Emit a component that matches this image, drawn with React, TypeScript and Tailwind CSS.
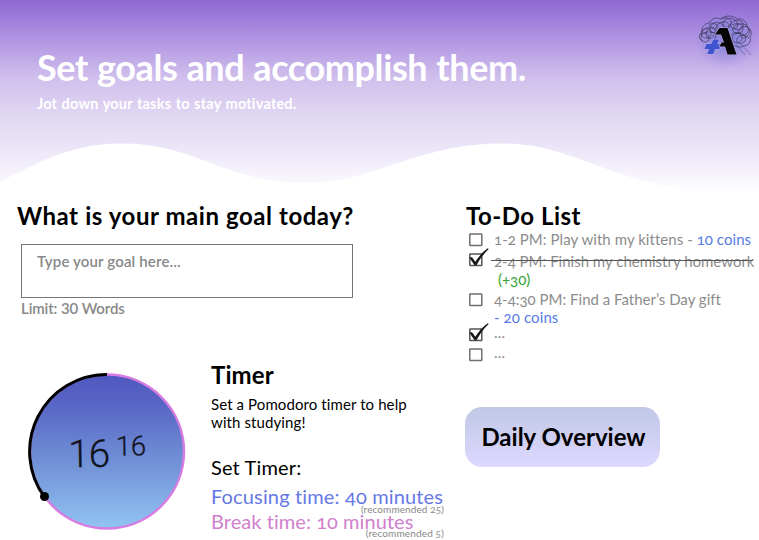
import React from 'react';

interface Todo {
  label: string;
  done: boolean;
}

function CheckBox({ done }: { done: boolean }) {
  return (
    <svg className="h-[18px] w-[22px] shrink-0 overflow-visible" viewBox="0 0 22 18" fill="none">
      <rect x="0.8" y="4" width="12" height="11.5" rx="0.6" stroke={done ? '#555' : '#6f6f6f'} strokeWidth="1.5" />
      {done && (
        <path d="M0.300 7.500 L3 7.300 L6.300 11.800 C10 6 14 1.500 18.800 -1.800 L19.700 -1 C14.500 4 10.500 9.500 7.500 15.300 L5.500 15.300 Z" fill="#181818" />
      )}
    </svg>
  );
}

function Logo() {
  return (
    <svg className="h-[54px] w-[60px] overflow-visible" viewBox="0 0 60 54" fill="none">
      <defs>
        <radialGradient id="glow">
          <stop offset="0.3" stopColor="#7d83dc" stopOpacity="0.75" />
          <stop offset="1" stopColor="#9a86df" stopOpacity="0" />
        </radialGradient>
      </defs>
      <ellipse cx="29" cy="25" rx="33" ry="30" fill="url(#glow)" />
      <g transform="translate(-1 -1)" stroke="#343150" strokeWidth="0.75" strokeOpacity="0.85">
        <path d="M7 28c-4-1-5-6-1-9-1-6 4-9 8-9 1-5 7-6 11-4 4-4 12-4 16 0 6-1 10 3 10 8 5 2 5 7 3 10 2 5-2 9-7 9-3 2-7 1-9-1" />
        <path d="M5 19c3-5 9-4 10 0s-4 8-8 5 1-9 6-10 8 3 5 8-8 4-8-1 5-7 9-5" />
        <path d="M13 12c4-3 10-1 9 4s-8 5-8 0 5-8 10-6 4 8 0 9-6-5-2-8 10-3 11 1-4 7-7 4" />
        <path d="M25 6c5-3 11 0 10 5s-9 4-8-1 8-6 12-3 3 9-1 9-5-6 0-8 10 0 9 5-8 5-9 1" />
        <path d="M36 12c5-3 11-1 11 4s-8 6-10 2 4-8 10-7 7 7 3 10-9 0-7-4 8-5 10-1-2 9-6 9" />
        <path d="M35 22c3-4 10-3 11 2s-6 8-9 4 2-9 7-8 8 6 4 9-8 1-7-3 9-5 12-1" />
        <path d="M4 22c3-4 9-2 9 3s-7 5-8 1 4-8 10-7 6 6 2 8" />
        <path d="M40 31l9 11M45 31l10 11" strokeOpacity="0.5" />
      </g>
      <g stroke="#b9a3e6" strokeWidth="1.500" strokeLinejoin="round" paintOrder="stroke">
        <path d="M9.500 30h4.700l2-4.500h6l-2 4.500h4.300l-2 5h-4.300l-2 5h-6l2-5h-4.800z" fill="#4054d2" />
        <path d="M18 20.500l4.500-6.500h8l9 26.500h-9l-2.500-8h-5.500l2-4h2.500l-3-8z" fill="#050505" />
      </g>
    </svg>
  );
}

function Header() {
  return (
    <header className="flex h-[195px] flex-col bg-[linear-gradient(#8f67d3_0px,#b398e3_42px,#d0bfec_78px,#e2d9f3_120px,#f0ebfa_160px,#ffffff_194px)]">
      <div className="flex h-[140px] shrink-0 justify-between pl-[37px]">
        <div className="pt-[43px] text-white">
          <h1 className="text-[36px] leading-[48px] font-bold tracking-[-0.38px] whitespace-nowrap [word-spacing:0.6px]">Set goals and accomplish them.</h1>
          <p className="pt-[3px] text-[14.5px] leading-5 font-bold tracking-[0.2px] whitespace-nowrap [word-spacing:0.7px]">Jot down your tasks to stay motivated.</p>
        </div>
        <div className="pt-[14px] pr-[2px]">
          <Logo />
        </div>
      </div>
      <svg className="h-[55px] w-full shrink-0" viewBox="0 140 759 55" preserveAspectRatio="none">
        <path
          d="M0 182 C40 162 70 143.500 123 143.500 C195 143.500 225 183 307 183 C375 183 415 143.500 503 143.500 C580 143.500 620 193 735 193 L759 192 V195 H0 Z"
          fill="#fff"
        />
      </svg>
    </header>
  );
}

function Dial() {
  return (
    <svg className="h-[160px] w-[160px] shrink-0" viewBox="0 0 160 160" fill="none">
      <defs>
        <linearGradient id="dial" x1="0" y1="0" x2="0" y2="1">
          <stop offset="0" stopColor="#4f58bf" />
          <stop offset="0.2" stopColor="#5866c5" />
          <stop offset="0.6" stopColor="#7394d8" />
          <stop offset="1" stopColor="#91c4f2" />
        </linearGradient>
      </defs>
      <circle cx="80" cy="80.500" r="77" fill="url(#dial)" stroke="#d77ce2" strokeWidth="2.500" />
      <path d="M80 3.500 A77 77 0 0 0 17.500 126" stroke="#000" strokeWidth="3" />
      <circle cx="17.500" cy="125.500" r="4.500" fill="#000" />
      <g fill="#10131c" stroke="#10131c" strokeWidth="0.3" fontFamily="Roboto" fontWeight="300">
        <text x="41.500" y="96" fontSize="38.500" letterSpacing="-1" transform="rotate(-1 60 90)">16</text>
        <text x="89" y="84.500" fontSize="27.500" letterSpacing="-0.3" transform="rotate(-1 100 80)">16</text>
      </g>
    </svg>
  );
}

function TimerSection() {
  return (
    <section className="flex">
      <div className="pt-[11px]">
        <Dial />
      </div>
      <div className="pl-[24px]">
        <h2 className="text-[24px] leading-[30px] font-bold tracking-[0.1px]">Timer</h2>
        <p className="pt-[6px] text-[15px] leading-[17.500px] tracking-[0.1px] whitespace-nowrap">
          Set a Pomodoro timer to help
          <br />
          with studying!
        </p>
        <h3 className="pt-[22px] text-[20px] leading-[28px] tracking-[0.15px]">Set Timer:</h3>
        <div className="flex w-[233px] flex-col whitespace-nowrap">
          <p className="pt-[3px] text-[20px] leading-[25px] tracking-[0.15px] text-[#6678e5]">Focusing time: <span className="[font-variant-numeric:oldstyle-nums]">40</span> minutes</p>
          <p className="-mt-[6px] self-end text-[10px] leading-3 tracking-[0.1px] text-[#888] [font-variant-numeric:oldstyle-nums]">(recommended 25)</p>
          <p className="-mt-[6px] text-[20px] leading-[25px] tracking-[0.06px] text-[#d080cd]">Break time: <span className="[font-variant-numeric:oldstyle-nums]">10</span> minutes</p>
          <p className="-mt-[7px] self-end text-[10px] leading-3 tracking-[0.15px] text-[#888] [font-variant-numeric:oldstyle-nums]">(recommended 5)</p>
        </div>
      </div>
    </section>
  );
}

function TodoList() {
  const todos: Todo[] = [
    { label: '...', done: true },
    { label: '...', done: false }
  ];

  return (
    <section className="text-[15px] whitespace-nowrap text-[#8c8c8c]">
      <h2 className="text-[24px] leading-[30px] font-bold tracking-[0.5px] text-black">To-Do List</h2>
      <ul className="-mt-px pl-[3px] [font-variant-numeric:oldstyle-nums]">
        <li className="flex h-[20px] gap-[3px] leading-[18px]">
          <CheckBox done={false} />
          <span className="tracking-[0.05px]">1-2 PM: Play with my kittens - <span className="text-[#567be4]">10 coins</span></span>
        </li>
        <li className="flex h-[40px] gap-[3px] leading-[18px]">
          <CheckBox done />
          <div className="relative pt-[2px]">
            <p>2-4 PM: Finish my chemistry homework</p>
            <span className="absolute top-[10px] -left-[3px] h-px w-[262px] bg-[#555]" />
            <p className="pl-[4px] text-[#35a337]">(+30)</p>
          </div>
        </li>
        <li className="flex h-[35px] gap-[3px] leading-[18px]">
          <CheckBox done={false} />
          <div>
            <p>4-4:30 PM: Find a Father’s Day gift</p>
            <p className="tracking-[0.1px] text-[#567be4]">- 20 coins</p>
          </div>
        </li>
        {todos.map((todo, index) => (
          <li key={index} className="flex h-[20px] gap-[3px] leading-[15px]">
            <CheckBox done={todo.done} />
            <span className="tracking-[0.2px]">{todo.label}</span>
          </li>
        ))}
      </ul>
      <button className="mt-[42px] -ml-px flex h-[60px] w-[195px] items-center justify-center rounded-[17px] bg-linear-to-b from-[#c1c8e5] to-[#ddd8ff] pl-[2px] text-[24px] font-bold text-black">
        Daily Overview
      </button>
    </section>
  );
}

export default function App() {
  return (
    <div className="flex h-[540px] w-[759px] flex-col overflow-hidden bg-white font-[Lato,sans-serif] text-black [font-variant-ligatures:none]">
      <Header />
      <main className="flex">
        <div className="w-[466px] shrink-0 pt-[6px]">
          <section className="pl-[17px]">
            <h2 className="text-[24px] leading-[30px] font-bold tracking-[0.5px] whitespace-nowrap [word-spacing:0.3px]">What is your main goal today?</h2>
            <div className="mt-[13px] ml-[4px] h-[54px] w-[332px] border border-[#757575] pt-[6px] pl-[15px] text-[15px] leading-5 font-semibold tracking-[0.15px] text-[#888]">
              Type your goal here...
            </div>
            <p className="ml-[4px] text-[15px] leading-[20px] font-semibold tracking-[-0.1px] text-[#888]">Limit: 30 Words</p>
          </section>
          <div className="pt-[42px] pl-[27px]">
            <TimerSection />
          </div>
        </div>
        <div className="pt-[6px]">
          <TodoList />
        </div>
      </main>
    </div>
  );
}
